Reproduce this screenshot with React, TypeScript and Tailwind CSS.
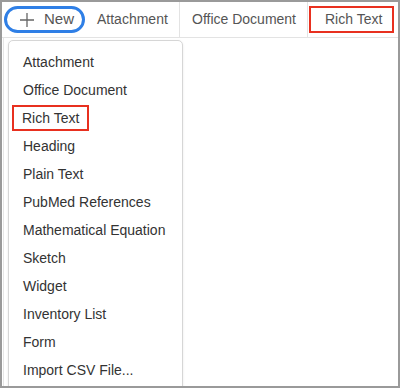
import { useState } from 'react';

const menuItems = [
    'Attachment',
    'Office Document',
    'Rich Text',
    'Heading',
    'Plain Text',
    'PubMed References',
    'Mathematical Equation',
    'Sketch',
    'Widget',
    'Inventory List',
    'Form',
    'Import CSV File...',
];

export default function App() {
    const [open] = useState(true);

    return (
        <div
            className="w-[400px] h-[388px] bg-white border-2 border-[#9a9a9a] overflow-hidden text-[#333] text-[14px]"
            style={{ fontFamily: '"Liberation Sans", Arial, sans-serif' }}
        >
            {/* toolbar */}
            <div className="flex items-stretch h-[36px] border-b border-[#e3e3e3] whitespace-nowrap text-[#555]">
                <div className="flex items-center w-[86px] pl-[2px]">
                    <button className="flex items-center gap-[10px] h-[27px] w-[81px] pl-[13px] rounded-full border-[3px] border-[#2f7fe6] text-[15px] text-[#555]">
                        <svg width="14" height="14" viewBox="0 0 14 14" className="text-[#666]">
                            <path d="M7 0v14M0 7h14" stroke="currentColor" strokeWidth="1.3" />
                        </svg>
                        New
                    </button>
                </div>
                <div className="flex items-center w-[92px] pl-[9px] border-r border-[#e3e3e3]">Attachment</div>
                <div className="flex items-center w-[128px] pl-[12px] border-r border-[#e3e3e3]">Office Document</div>
                <div className="flex items-center w-[85px] ml-[1px] my-[4px] pl-[14px] border-2 border-[#e8301f]">Rich Text</div>
            </div>

            {/* body */}
            <div className="flex h-full">
                <div className="w-[2px] border-r border-[#e6e6e6] h-full" />
                {open && (
                    <div className="ml-[4px] mt-[2px] w-[175px] h-[360px] border border-[#d6d6d6] rounded-t-[5px] bg-white pt-[7px] shadow-[0_1px_3px_rgba(0,0,0,0.08)]">
                        {menuItems.map((item) => (
                            <div key={item} className="h-[28px] flex items-center px-[4px]">
                                <span
                                    className={
                                        item === 'Rich Text'
                                            ? 'px-[8px] h-[26px] flex items-center border-2 border-[#e8301f] -ml-[1px]'
                                            : 'px-[10px]'
                                    }
                                >
                                    {item}
                                </span>
                            </div>
                        ))}
                    </div>
                )}
            </div>
        </div>
    );
}
